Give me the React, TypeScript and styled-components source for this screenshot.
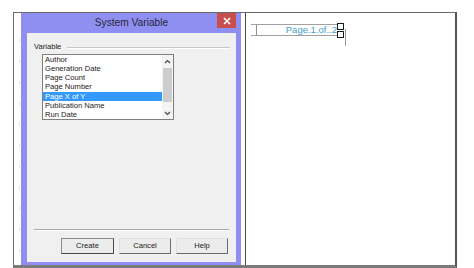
import styled, { createGlobalStyle } from 'styled-components';

const GlobalStyle = createGlobalStyle`
	body {
		margin: 0;
		background: #ffffff;
		font-family: 'Liberation Sans', Arial, sans-serif;
	}
`;

const variables = [
	'Author',
	'Generation Date',
	'Page Count',
	'Page Number',
	'Page X of Y',
	'Publication Name',
	'Run Date',
];

const App = (): JSX.Element => {
	const selected = 'Page X of Y';

	return (
		<>
			<GlobalStyle />
			<Frame>
				<Ruler />
				<Dialog>
					<TitleBar>
						<Title>System Variable</Title>
						<CloseButton aria-label="close">
							<svg width="8" height="8" viewBox="0 0 8 8">
								<path d="M1 1 L7 7 M7 1 L1 7" stroke="#fff" strokeWidth="1.6" />
							</svg>
						</CloseButton>
					</TitleBar>
					<Client>
						<Group>
							<GroupHead>
								<Label>Variable</Label>
								<GroupLine />
							</GroupHead>
							<ListBox>
								<Items>
									{variables.map((v) => (
										<Item key={v} $active={v === selected}>
											{v}
										</Item>
									))}
								</Items>
								<ScrollBar>
									<Arrow>
										<svg width="7" height="5" viewBox="0 0 7 5">
											<path d="M1 4 L3.5 1.5 L6 4" stroke="#444" strokeWidth="1.2" fill="none" />
										</svg>
									</Arrow>
									<Track>
										<Thumb />
									</Track>
									<Arrow>
										<svg width="7" height="5" viewBox="0 0 7 5">
											<path d="M1 1 L3.5 3.5 L6 1" stroke="#444" strokeWidth="1.2" fill="none" />
										</svg>
									</Arrow>
								</ScrollBar>
							</ListBox>
						</Group>
						<Footer>
							<Separator />
							<ButtonRow>
								<Button $default>Create</Button>
								<Button>Cancel</Button>
								<Button>Help</Button>
							</ButtonRow>
						</Footer>
					</Client>
				</Dialog>
				<Gap />
				<Page>
					<FieldRow>
						<Field>
							<FieldTick />
							<FieldText>Page.1.of..2</FieldText>
						</Field>
						<EndMark>
							<MarkBox />
							<MarkBox />
							<MarkTail />
						</EndMark>
					</FieldRow>
				</Page>
			</Frame>
		</>
	);
};

export default App;

const Frame = styled.div`
	display: flex;
	box-sizing: border-box;
	margin: 12px 0 0 13px;
	width: 444px;
	height: 256px;
	border-top: 1px solid #6a6a6a;
	border-left: 1px solid #6a6a6a;
	border-right: 2px solid #555555;
	border-bottom: 3px solid #7a7a7a;
	background: #ffffff;
`;

const Ruler = styled.div`
	width: 7px;
	flex: none;
	background:
		repeating-linear-gradient(
			to bottom,
			transparent 0,
			transparent 18px,
			#e2e2e2 18px,
			#e2e2e2 21px
		)
		right 1px top 8px / 1px 100% no-repeat;
`;

const Dialog = styled.div`
	display: flex;
	flex-direction: column;
	flex: none;
	box-sizing: border-box;
	width: 220px;
	padding: 0 5px 3px 6px;
	background: #8f8ff2;
`;

const TitleBar = styled.div`
	display: flex;
	align-items: flex-start;
	height: 20px;
	flex: none;
`;

const Title = styled.div`
	flex: 1;
	padding: 4px 0 0 19px;
	text-align: center;
	font-size: 10.2px;
	line-height: 12px;
	color: #262636;
`;

const CloseButton = styled.div`
	display: flex;
	align-items: center;
	justify-content: center;
	width: 19px;
	height: 15px;
	background: #c74f4f;
`;

const Client = styled.div`
	display: flex;
	flex-direction: column;
	flex: 1;
	background: #f0f0f0;
	font-size: 7.6px;
	color: #1a1a1a;
`;

const Group = styled.div`
	display: flex;
	flex-direction: column;
	padding: 9px 6px 0 7px;
`;

const GroupHead = styled.div`
	display: flex;
	align-items: center;
	gap: 6px;
	height: 10px;
`;

const Label = styled.span`
	line-height: 10px;
`;

const GroupLine = styled.div`
	flex: 1;
	height: 1px;
	background: #c8c8c8;
	box-shadow: 0 1px 0 #ffffff;
`;

const ListBox = styled.div`
	display: flex;
	box-sizing: border-box;
	width: 132px;
	height: 66px;
	margin: 2px 0 0 8px;
	border: 1px solid #7f7f7f;
	background: #ffffff;
`;

const Items = styled.div`
	flex: 1;
	display: flex;
	flex-direction: column;
`;

const Item = styled.div<{ $active?: boolean }>`
	height: 9.15px;
	line-height: 9.15px;
	padding-left: 2px;
	white-space: nowrap;
	background: ${(p) => (p.$active ? '#3399ff' : 'transparent')};
	color: ${(p) => (p.$active ? '#ffffff' : '#1a1a1a')};
`;

const ScrollBar = styled.div`
	display: flex;
	flex-direction: column;
	width: 11px;
	background: #f4f4f4;
`;

const Arrow = styled.div`
	display: flex;
	align-items: center;
	justify-content: center;
	height: 12px;
`;

const Track = styled.div`
	flex: 1;
	padding: 1px 1px;
`;

const Thumb = styled.div`
	height: 34px;
	background: #cdcdcd;
`;

const Footer = styled.div`
	margin-top: auto;
	display: flex;
	flex-direction: column;
	padding: 0 7px 8px 7px;
`;

const Separator = styled.div`
	height: 1px;
	background: #a8a8a8;
	box-shadow: 0 1px 0 #ffffff;
`;

const ButtonRow = styled.div`
	display: flex;
	justify-content: flex-end;
	gap: 5px;
	margin-top: 8px;
	padding-right: 1px;
`;

const Button = styled.div<{ $default?: boolean }>`
	box-sizing: border-box;
	width: ${(p) => (p.$default ? '53px' : '52px')};
	height: 16px;
	line-height: 14px;
	text-align: center;
	background: #ececec;
	border: 1px solid;
	border-color: ${(p) =>
		p.$default ? '#8a8a8a #4a4a4a #4a4a4a #8a8a8a' : '#e0e0e0 #6a6a6a #6a6a6a #e0e0e0'};
	color: #1a1a1a;
`;

const Gap = styled.div`
	width: 4px;
	flex: none;
	border-right: 1px solid #4a4a4a;
`;

const Page = styled.div`
	flex: 1;
	padding: 10px 0 0 5px;
	background: #ffffff;
`;

const FieldRow = styled.div`
	display: flex;
	align-items: flex-start;
`;

const Field = styled.div`
	display: flex;
	align-items: stretch;
	box-sizing: border-box;
	width: 89px;
	height: 12px;
	margin-top: 1px;
	margin-right: -3px;
	border-top: 1px solid #a0a0a0;
	border-bottom: 1px solid #a0a0a0;
`;

const FieldTick = styled.div`
	width: 1px;
	margin-left: 5px;
	background: #909090;
`;

const FieldText = styled.div`
	flex: 1;
	padding-right: 3px;
	text-align: right;
	font-size: 9.5px;
	line-height: 10px;
	color: #3f9fc4;
	white-space: nowrap;
`;

const EndMark = styled.div`
	position: relative;
	display: flex;
	flex-direction: column;
	width: 8px;
`;

const MarkBox = styled.div`
	box-sizing: border-box;
	width: 7px;
	height: 7px;
	border: 1px solid #1a1a1a;
	background: #ffffff;
	& + & {
		margin-top: 1px;
	}
`;

const MarkTail = styled.div`
	position: absolute;
	left: 8px;
	top: 6px;
	width: 1px;
	height: 17px;
	background: #9a9a9a;
`;
